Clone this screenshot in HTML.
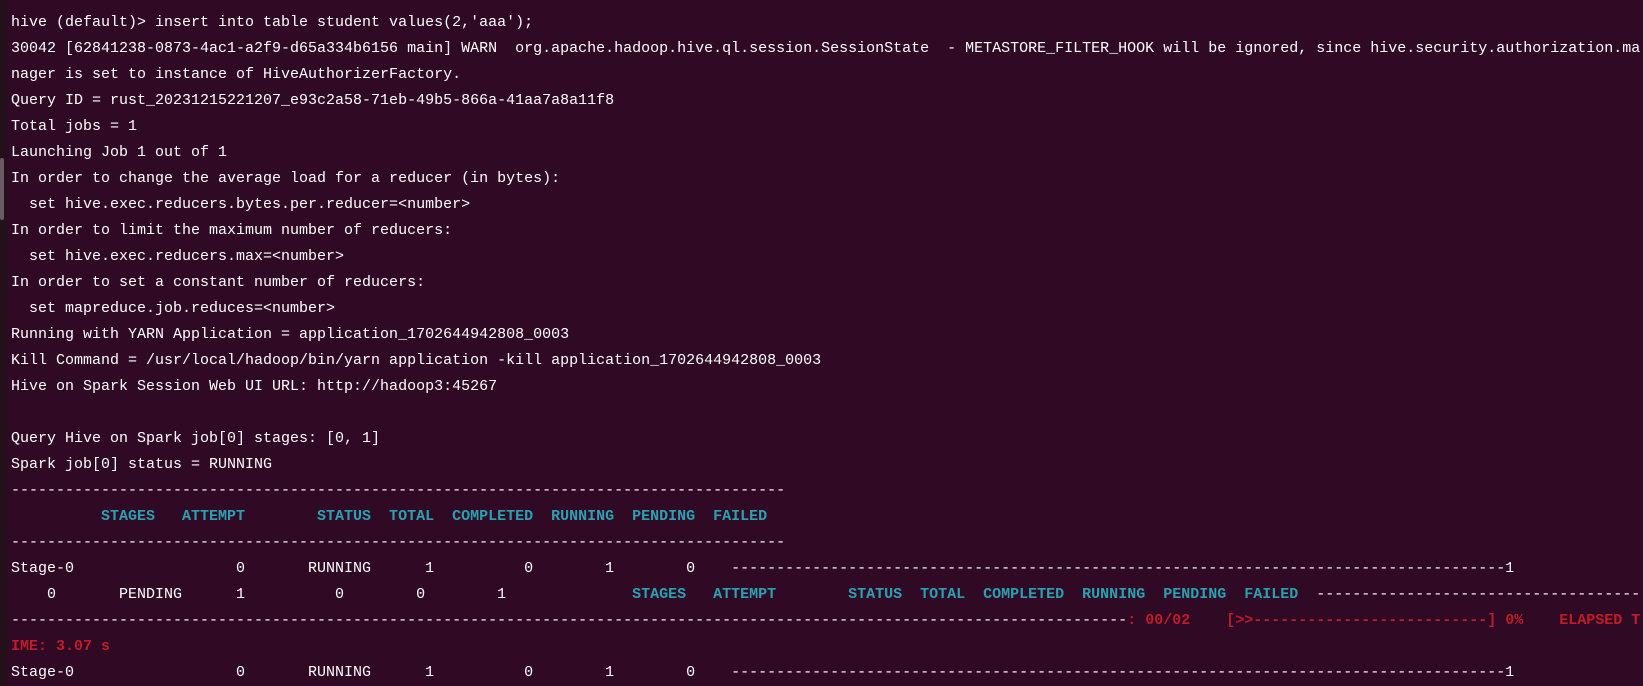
<!DOCTYPE html>
<html><head><meta charset="utf-8"><style>
html,body{margin:0;padding:0;width:1643px;height:686px;overflow:hidden;background:#300a24;}
.g{position:absolute;left:0;top:0;width:7px;height:686px;background:#241019;}
.sb{position:absolute;left:0;top:158px;width:4px;height:62px;background:#6a5a64;border-radius:2px;}
pre{position:absolute;left:11px;top:-16px;margin:0;font-family:"Liberation Mono",monospace;font-size:15px;line-height:26px;color:#ffffff;white-space:pre;}
.t{color:#2aa1b3;font-weight:bold;}
.r{color:#c01c28;font-weight:bold;}
</style></head><body>
<div class="g"></div><div class="sb"></div>
<pre>Hive Session ID = 4f1a2b7c-9c12-4f3f-b3d7-c583c3a1f4cd
hive (default)&gt; insert into table student values(2,'aaa');
30042 [62841238-0873-4ac1-a2f9-d65a334b6156 main] WARN  org.apache.hadoop.hive.ql.session.SessionState  - METASTORE_FILTER_HOOK will be ignored, since hive.security.authorization.ma
nager is set to instance of HiveAuthorizerFactory.
Query ID = rust_20231215221207_e93c2a58-71eb-49b5-866a-41aa7a8a11f8
Total jobs = 1
Launching Job 1 out of 1
In order to change the average load for a reducer (in bytes):
  set hive.exec.reducers.bytes.per.reducer=&lt;number&gt;
In order to limit the maximum number of reducers:
  set hive.exec.reducers.max=&lt;number&gt;
In order to set a constant number of reducers:
  set mapreduce.job.reduces=&lt;number&gt;
Running with YARN Application = application_1702644942808_0003
Kill Command = /usr/local/hadoop/bin/yarn application -kill application_1702644942808_0003
Hive on Spark Session Web UI URL: http://hadoop3:45267

Query Hive on Spark job[0] stages: [0, 1]
Spark job[0] status = RUNNING
--------------------------------------------------------------------------------------
<span class="t">          STAGES   ATTEMPT        STATUS  TOTAL  COMPLETED  RUNNING  PENDING  FAILED</span>
--------------------------------------------------------------------------------------
Stage-0                  0       RUNNING      1          0        1        0    --------------------------------------------------------------------------------------1
    0       PENDING      1          0        0        1              <span class="t">STAGES   ATTEMPT        STATUS  TOTAL  COMPLETED  RUNNING  PENDING  FAILED</span>  ------------------------------------
----------------------------------------------------------------------------------------------------------------------------<span class="r">: 00/02    [&gt;&gt;--------------------------] 0%    ELAPSED T</span>
<span class="r">IME: 3.07 s</span>
Stage-0                  0       RUNNING      1          0        1        0    --------------------------------------------------------------------------------------1
</pre>
</body></html>
